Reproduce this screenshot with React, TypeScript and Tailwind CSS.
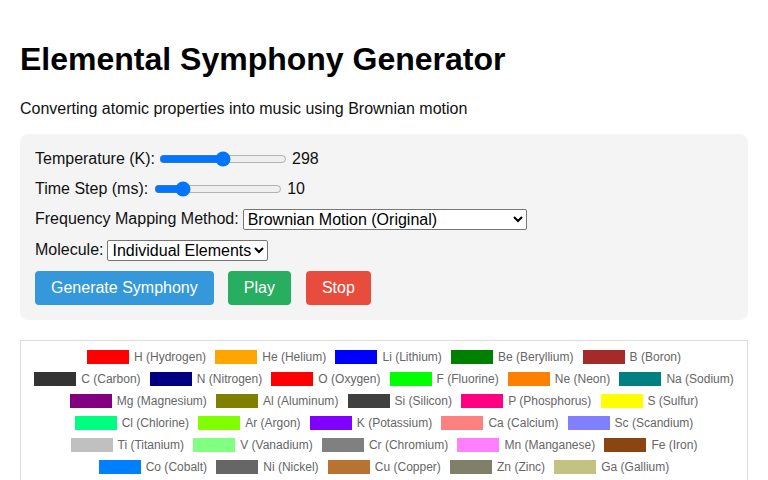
import { useState } from "react";

const elements: { symbol: string; name: string; color: string }[] = [
  { symbol: "H", name: "Hydrogen", color: "#ff0000" },
  { symbol: "He", name: "Helium", color: "#ffa500" },
  { symbol: "Li", name: "Lithium", color: "#0000ff" },
  { symbol: "Be", name: "Beryllium", color: "#008000" },
  { symbol: "B", name: "Boron", color: "#a52a2a" },
  { symbol: "C", name: "Carbon", color: "#333333" },
  { symbol: "N", name: "Nitrogen", color: "#000080" },
  { symbol: "O", name: "Oxygen", color: "#ff0000" },
  { symbol: "F", name: "Fluorine", color: "#00ff00" },
  { symbol: "Ne", name: "Neon", color: "#ff8000" },
  { symbol: "Na", name: "Sodium", color: "#008080" },
  { symbol: "Mg", name: "Magnesium", color: "#800080" },
  { symbol: "Al", name: "Aluminum", color: "#808000" },
  { symbol: "Si", name: "Silicon", color: "#404040" },
  { symbol: "P", name: "Phosphorus", color: "#ff0080" },
  { symbol: "S", name: "Sulfur", color: "#ffff00" },
  { symbol: "Cl", name: "Chlorine", color: "#00ff80" },
  { symbol: "Ar", name: "Argon", color: "#80ff00" },
  { symbol: "K", name: "Potassium", color: "#8000ff" },
  { symbol: "Ca", name: "Calcium", color: "#ff8080" },
  { symbol: "Sc", name: "Scandium", color: "#8080ff" },
  { symbol: "Ti", name: "Titanium", color: "#c0c0c0" },
  { symbol: "V", name: "Vanadium", color: "#80ff80" },
  { symbol: "Cr", name: "Chromium", color: "#808080" },
  { symbol: "Mn", name: "Manganese", color: "#ff80ff" },
  { symbol: "Fe", name: "Iron", color: "#8b4513" },
  { symbol: "Co", name: "Cobalt", color: "#0080ff" },
  { symbol: "Ni", name: "Nickel", color: "#666666" },
  { symbol: "Cu", name: "Copper", color: "#b87333" },
  { symbol: "Zn", name: "Zinc", color: "#7f7f6a" },
  { symbol: "Ga", name: "Gallium", color: "#c2c282" },
];

export default function App() {
  const [temp, setTemp] = useState(298);
  const [step, setStep] = useState(10);

  return (
    <div className="p-[20px] font-['Liberation_Sans',Arial,sans-serif] leading-[normal] text-[#111] text-[16px] bg-white">
      <h1 className="text-[32px] font-bold my-[21.44px] text-black">Elemental Symphony Generator</h1>
      <p className="mb-4">Converting atomic properties into music using Brownian motion</p>

      {/* Controls */}
      <div className="bg-[#f4f4f4] rounded-lg p-[15px] mb-[20px]">
        <div className="flex items-center h-[20px] mb-[10px]">
          <label>Temperature (K):</label>
          <input
            type="range"
            min={0}
            max={600}
            value={temp}
            onChange={(e) => setTemp(Number(e.target.value))}
            className="ml-[4px] mr-[1px] w-[128px]"
          />
          <span className="ml-[4px]">{temp}</span>
        </div>
        <div className="flex items-center h-[20px] mb-[10px]">
          <label>Time Step (ms):</label>
          <input
            type="range"
            min={1}
            max={50}
            value={step}
            onChange={(e) => setStep(Number(e.target.value))}
            className="ml-[6px] mr-[1px] w-[128px]"
          />
          <span className="ml-[4px]">{step}</span>
        </div>
        <div className="flex items-center h-[21px] mb-[10px]">
          <label>Frequency Mapping Method:</label>
          <select className="ml-[4px] w-[284px] h-[21px] border border-[#767676] bg-white rounded-[2px] text-black">
            <option>Brownian Motion (Original)</option>
            <option>Atomic Mass</option>
            <option>Electronegativity</option>
          </select>
        </div>
        <div className="flex items-center h-[21px] mb-[10px]">
          <label>Molecule:</label>
          <select className="ml-[4px] w-[161px] h-[21px] border border-[#767676] bg-white rounded-[2px] text-black">
            <option>Individual Elements</option>
            <option>Water (H2O)</option>
            <option>Methane (CH4)</option>
          </select>
        </div>
        <div className="flex">
          <button className="mr-[14px] px-4 h-[34px] rounded bg-[#3498db] text-white">Generate Symphony</button>
          <button className="mr-[15px] px-4 h-[34px] rounded bg-[#27ae60] text-white">Play</button>
          <button className="px-4 h-[34px] rounded bg-[#e74c3c] text-white">Stop</button>
        </div>
      </div>

      {/* Legend */}
      <div className="border border-[#dddddd] px-[5px] pt-[5px] pb-[10px] flex flex-wrap justify-center">
        {elements.map((el) => (
          <div key={el.symbol} className="flex items-center h-[22px] mx-[4.6px]">
            <span className="w-[42px] h-[14px] mr-[5px]" style={{ backgroundColor: el.color }} />
            <span className="text-[12px] text-[#666]">
              {el.symbol} ({el.name})
            </span>
          </div>
        ))}
      </div>
    </div>
  );
}
